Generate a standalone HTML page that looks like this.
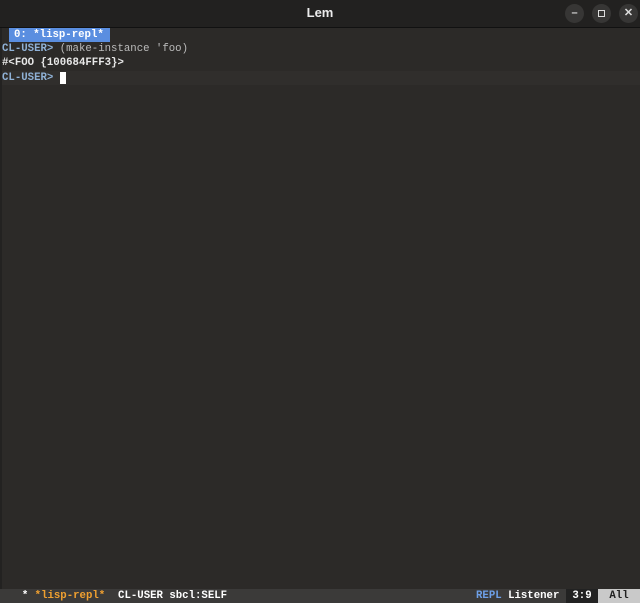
<!DOCTYPE html>
<html><head><style>
body{margin:0;width:640px;height:603px;background:#2c2a28;overflow:hidden;font-family:"Liberation Mono",monospace;}
.title{position:absolute;left:0;top:0;width:640px;height:27px;background:#222120;border-bottom:1px solid #111;color:#ececec;font-family:"Liberation Sans",sans-serif;font-weight:bold;font-size:13px;text-align:center;line-height:26px;}
.btn{position:absolute;top:4px;width:19px;height:19px;border-radius:50%;background:#373635;color:#ddd;font-size:11px;line-height:19px;text-align:center;}
.ln{position:absolute;left:2px;height:14px;line-height:14px;font-size:10.7px;font-weight:bold;white-space:pre;color:#e8e8e8;}
.p{color:#8fb1d6}
.dim{color:#bbbbbb;font-weight:normal}
</style></head><body>
<div class="title">Lem
<div class="btn" style="left:565px">–</div>
<div class="btn" style="left:592px"><span style="display:inline-block;width:7px;height:7px;border:1.5px solid #ddd;box-sizing:border-box;vertical-align:-1px"></span></div>
<div class="btn" style="left:619px">✕</div>
</div>
<div style="position:absolute;left:0;top:28px;width:2px;height:561px;background:#232221"></div>
<div class="ln" style="top:28px;left:9px;width:101px;box-sizing:border-box;background:#5a8ee0;color:#fff;padding-left:5px">0: *lisp-repl*</div>
<div class="ln" style="top:42px"><span class="p">CL-USER&gt;</span><span class="dim"> (make-instance 'foo)</span></div>
<div class="ln" style="top:56px">#&lt;FOO {100684FFF3}&gt;</div>
<div style="position:absolute;left:2px;top:71px;width:638px;height:14px;background:#302e2c"></div>
<div class="ln" style="top:71px"><span class="p">CL-USER&gt;</span> <span style="background:#fff">&nbsp;</span></div>
<div style="position:absolute;left:0;top:589px;width:640px;height:14px;background:#3b3a39"></div>
<div class="ln" style="top:589px;left:9px;color:#fff">  * <span style="color:#f0a030">*lisp-repl*</span>  CL-USER sbcl:SELF</div>
<div class="ln" style="top:589px;left:476px;color:#fff"><span style="color:#6ea0e8">REPL</span> Listener</div>
<div class="ln" style="top:589px;left:566px;width:32px;background:#222;color:#fff;text-align:center">3:9</div>
<div class="ln" style="top:589px;left:598px;width:42px;background:#c9c9c9;color:#222;text-align:center">All</div>
</body></html>
